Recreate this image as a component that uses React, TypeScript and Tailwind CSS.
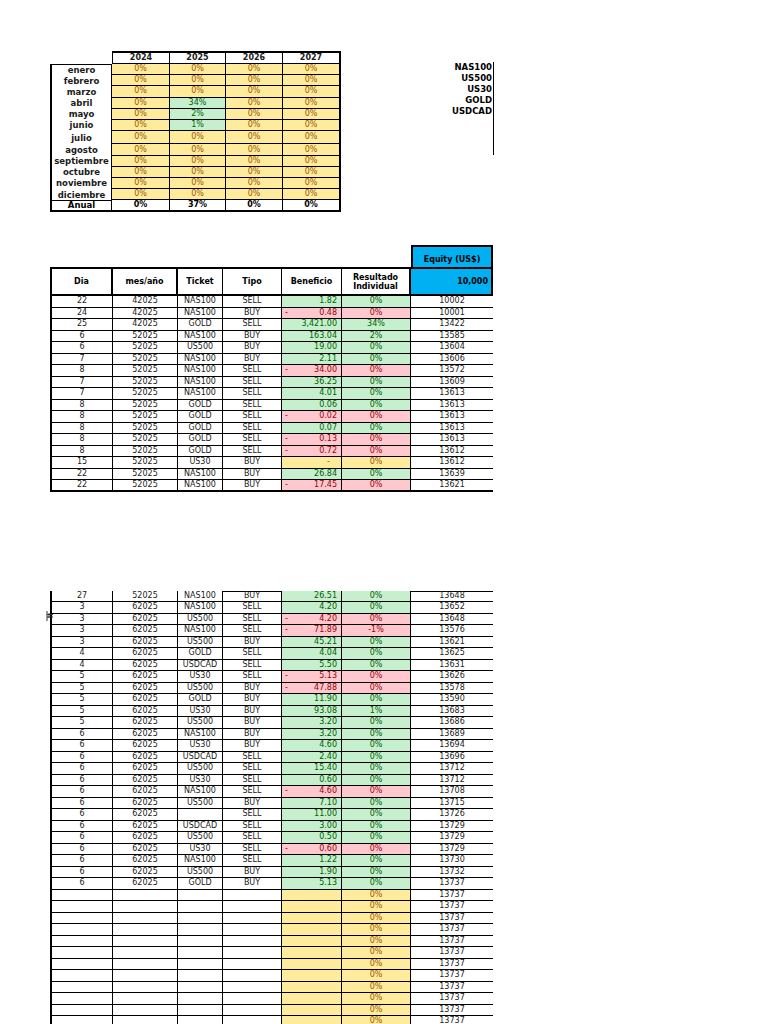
type Tone = "g" | "r" | "y"
type Trade = [string, string, string, string, string, string, string, Tone]

const FILL: Record<Tone, string> = {
  g: "bg-[#c6efce] text-[#006100]",
  r: "bg-[#ffc7ce] text-[#9c0006]",
  y: "bg-[#ffeb9c] text-[#9c5700]",
}

const MONTHS = ["enero", "febrero", "marzo", "abril", "mayo", "junio", "julio", "agosto", "septiembre", "octubre", "noviembre", "diciembre"]
const YEAR_W = ["w-[58px]", "w-[56px]", "w-[57px]", "w-[58px]"]
const TICKERS = ["NAS100", "US500", "US30", "GOLD", "USDCAD"]

const FIRST: Trade[] = [
  ["22", "42025", "NAS100", "SELL", "1.82", "0%", "10002", "g"],
  ["24", "42025", "NAS100", "BUY", "0.48", "0%", "10001", "r"],
  ["25", "42025", "GOLD", "SELL", "3,421.00", "34%", "13422", "g"],
  ["6", "52025", "NAS100", "BUY", "163.04", "2%", "13585", "g"],
  ["6", "52025", "US500", "BUY", "19.00", "0%", "13604", "g"],
  ["7", "52025", "NAS100", "BUY", "2.11", "0%", "13606", "g"],
  ["8", "52025", "NAS100", "SELL", "34.00", "0%", "13572", "r"],
  ["7", "52025", "NAS100", "SELL", "36.25", "0%", "13609", "g"],
  ["7", "52025", "NAS100", "SELL", "4.01", "0%", "13613", "g"],
  ["8", "52025", "GOLD", "SELL", "0.06", "0%", "13613", "g"],
  ["8", "52025", "GOLD", "SELL", "0.02", "0%", "13613", "r"],
  ["8", "52025", "GOLD", "SELL", "0.07", "0%", "13613", "g"],
  ["8", "52025", "GOLD", "SELL", "0.13", "0%", "13613", "r"],
  ["8", "52025", "GOLD", "SELL", "0.72", "0%", "13612", "r"],
  ["15", "52025", "US30", "BUY", "-", "0%", "13612", "y"],
  ["22", "52025", "NAS100", "BUY", "26.84", "0%", "13639", "g"],
  ["22", "52025", "NAS100", "BUY", "17.45", "0%", "13621", "r"],
]

const SECOND: Trade[] = [
  ["27", "52025", "NAS100", "BUY", "26.51", "0%", "13648", "g"],
  ["3", "62025", "NAS100", "SELL", "4.20", "0%", "13652", "g"],
  ["3", "62025", "US500", "SELL", "4.20", "0%", "13648", "r"],
  ["3", "62025", "NAS100", "SELL", "71.89", "-1%", "13576", "r"],
  ["3", "62025", "US500", "BUY", "45.21", "0%", "13621", "g"],
  ["4", "62025", "GOLD", "SELL", "4.04", "0%", "13625", "g"],
  ["4", "62025", "USDCAD", "SELL", "5.50", "0%", "13631", "g"],
  ["5", "62025", "US30", "SELL", "5.13", "0%", "13626", "r"],
  ["5", "62025", "US500", "BUY", "47.88", "0%", "13578", "r"],
  ["5", "62025", "GOLD", "BUY", "11.90", "0%", "13590", "g"],
  ["5", "62025", "US30", "BUY", "93.08", "1%", "13683", "g"],
  ["5", "62025", "US500", "BUY", "3.20", "0%", "13686", "g"],
  ["6", "62025", "NAS100", "BUY", "3.20", "0%", "13689", "g"],
  ["6", "62025", "US30", "BUY", "4.60", "0%", "13694", "g"],
  ["6", "62025", "USDCAD", "SELL", "2.40", "0%", "13696", "g"],
  ["6", "62025", "US500", "SELL", "15.40", "0%", "13712", "g"],
  ["6", "62025", "US30", "SELL", "0.60", "0%", "13712", "g"],
  ["6", "62025", "NAS100", "SELL", "4.60", "0%", "13708", "r"],
  ["6", "62025", "US500", "BUY", "7.10", "0%", "13715", "g"],
  ["6", "62025", "", "SELL", "11.00", "0%", "13726", "g"],
  ["6", "62025", "USDCAD", "SELL", "3.00", "0%", "13729", "g"],
  ["6", "62025", "US500", "SELL", "0.50", "0%", "13729", "g"],
  ["6", "62025", "US30", "SELL", "0.60", "0%", "13729", "r"],
  ["6", "62025", "NAS100", "SELL", "1.22", "0%", "13730", "g"],
  ["6", "62025", "US500", "BUY", "1.90", "0%", "13732", "g"],
  ["6", "62025", "GOLD", "BUY", "5.13", "0%", "13737", "g"],
  ...Array.from({ length: 12 }, (): Trade => ["", "", "", "", "", "0%", "13737", "y"]),
]

function Ben({ value, tone }: { value: string; tone: Tone }) {
  if (value === "-") return <span className="ml-auto pr-[7px]">-</span>
  return (
    <>
      <span>{tone === "r" ? "-" : ""}</span>
      <span>{value}</span>
    </>
  )
}

function TradeRow({ t, first, last }: { t: Trade; first?: boolean; last?: boolean }) {
  const [dia, mes, ticket, tipo, ben, pct, eq, tone] = t
  return (
    <div className={`flex h-[11.5px] border-l-2 border-black ${last ? "border-b-2" : "border-b"}`}>
      <div className="w-[61px] border-r border-black flex items-center justify-center">{dia}</div>
      <div className="w-[65px] border-r border-black flex items-center justify-center">{mes}</div>
      <div className="w-[45px] border-r border-black flex items-center justify-center">{ticket}</div>
      <div className={`w-[59px] border-r border-black flex items-center justify-center ${first ? "border-t" : ""}`}>{tipo}</div>
      <div className={`w-[60px] border-r border-black flex items-center justify-between pl-[3px] pr-[4px] ${FILL[tone]}`}>
        <Ben value={ben} tone={tone} />
      </div>
      <div className={`w-[69px] border-r border-black flex items-center justify-center ${FILL[tone]}`}>{pct}</div>
      <div className={`w-[82px] flex items-center justify-center border-black ${first ? "border-t" : ""}`}>{eq}</div>
    </div>
  )
}

function YearTable() {
  const pct = (y: number, m: number) => (y === 1 && m === 3 ? "34%" : y === 1 && m === 4 ? "2%" : y === 1 && m === 5 ? "1%" : "0%")
  return (
    <div className="w-[291px]">
      <div className="flex h-[13px] font-bold">
        <div className="w-[62px]" />
        {["2024", "2025", "2026", "2027"].map((y, i) => (
          <div
            key={y}
            className={`${YEAR_W[i]} border-t-2 border-b border-black flex items-center justify-center ${i === 0 ? "border-l" : ""} ${i === 3 ? "border-r-2" : "border-r"}`}
          >
            {y}
          </div>
        ))}
      </div>
      {MONTHS.map((m, mi) => (
        <div key={m} className={`flex ${m === "julio" ? "h-[13.3px]" : "h-[11.2px]"}`}>
          <div className={`w-[62px] border-l-2 border-r border-black flex items-center justify-center font-bold text-[8.5px] ${mi === 0 ? "border-t" : ""}`}>
            {m}
          </div>
          {YEAR_W.map((w, yi) => {
            const v = pct(yi, mi)
            return (
              <div
                key={w}
                className={`${w} border-b border-black flex items-center justify-center ${v === "0%" ? FILL.y : FILL.g} ${yi === 3 ? "border-r-2" : "border-r"}`}
              >
                {v}
              </div>
            )
          })}
        </div>
      ))}
      <div className="flex h-[11.7px] font-bold text-black">
        <div className="w-[62px] border-l-2 border-r border-t border-b-2 border-black flex items-center justify-center text-[8.5px]">Anual</div>
        {["0%", "37%", "0%", "0%"].map((v, i) => (
          <div key={i} className={`${YEAR_W[i]} border-b-2 border-black flex items-center justify-center ${i === 3 ? "border-r-2" : "border-r"}`}>
            {v}
          </div>
        ))}
      </div>
    </div>
  )
}

export default function App() {
  return (
    <div className="relative w-[768px] h-[1024px] overflow-hidden bg-white pt-[51px] pl-[50px] font-['DejaVu_Sans',sans-serif] text-[8px] leading-none text-[#1a1a1a]">
      <div className="flex">
        <YearTable />
        <div className="ml-[99px] mt-[11px] w-[54px] h-[93px] border-r border-black flex flex-col items-end pr-[1px] font-bold text-[8.5px] text-black">
          {TICKERS.map((t) => (
            <div key={t} className="h-[11px] flex items-center">{t}</div>
          ))}
        </div>
      </div>

      {/* tabla de operaciones */}
      <div className="mt-[33px] w-[443px]">
        <div className="flex">
          <div className="w-[361px]" />
          <div className="w-[82px] h-[22px] border-t-2 border-x-2 border-black bg-[#00b0f0] flex items-end justify-center pb-[3px] font-bold text-black">
            Equity (US$)
          </div>
        </div>
        <div className="flex h-[29px] border-y-2 border-l-2 border-black font-bold text-black text-center">
          <div className="w-[61px] border-r-2 border-black flex items-center justify-center">Dia</div>
          <div className="w-[65px] border-r-2 border-black flex items-center justify-center">mes/año</div>
          <div className="w-[45px] border-r border-black flex items-center justify-center">Ticket</div>
          <div className="w-[59px] border-r border-black flex items-center justify-center">Tipo</div>
          <div className="w-[60px] border-r border-black flex items-center justify-center">Beneficio</div>
          <div className="w-[69px] border-r-2 border-black flex items-center justify-center leading-[9px]">
            Resultado<br />Individual
          </div>
          <div className="w-[82px] border-r-2 border-black bg-[#00b0f0] flex items-center justify-end pr-[3px]">10,000</div>
        </div>
        {FIRST.map((t, i) => (
          <TradeRow key={i} t={t} last={i === FIRST.length - 1} />
        ))}

        <div className="mt-[99px]">
          {SECOND.map((t, i) => (
            <TradeRow key={i} t={t} first={i === 0} />
          ))}
        </div>
      </div>

      <svg className="absolute left-[44px] top-[610px]" width="9" height="12" viewBox="0 0 9 12">
        <path d="M3 1v10M3 4.5h6M3 7h6M5 3v5" stroke="#333" strokeWidth="1" fill="none" />
      </svg>
    </div>
  )
}
